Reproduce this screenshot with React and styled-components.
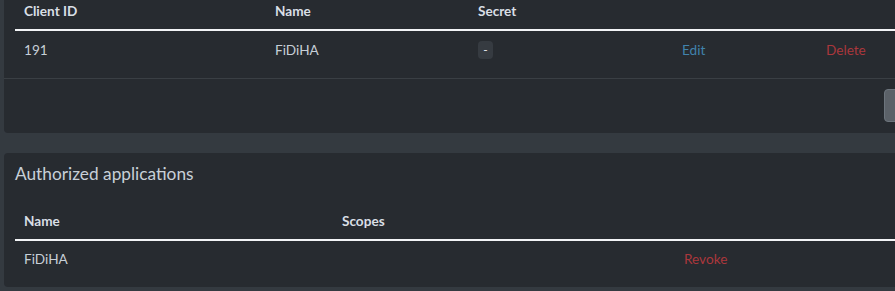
import styled, { createGlobalStyle } from "styled-components";

const GlobalStyle = createGlobalStyle`
    *, *::before, *::after {
        box-sizing: border-box;
    }

    html, body {
        margin: 0;
        padding: 0;
        background: #343a40;
        overflow: hidden;
    }

    body {
        font-family: Lato, "Open Sans", sans-serif;
        color: #ced4da;
    }
`

const Page = styled.div`
    display: flex;
    flex-direction: column;
    gap: 20px;
    margin-top: -18px;
    padding-left: 4px;
    width: 948px;
`

const Card = styled.section`
    background: #272b30;
    border-radius: 4px;
`

const CardBody = styled.div`
    padding: 11px 11px 10px;
`

const CardTitle = styled.h5`
    margin: 0 0 19px;
    font-size: 17.3px;
    font-weight: 400;
    line-height: 20px;
    color: #c8d0d8;
`

const CardFooter = styled.div`
    display: flex;
    padding: 10px 0 11px;
    border-top: 1px solid #3a3f44;
`

const FooterButton = styled.button`
    width: 60px;
    height: 33px;
    margin-left: 880px;
    background: #5b6168;
    border: 1px solid #6c747c;
    border-radius: 4px;
    color: #fff;
    font-family: inherit;
`

const Table = styled.table`
    width: 922px;
    border-collapse: collapse;
    table-layout: fixed;
    font-size: 13.6px;
    line-height: 18px;
`

const Th = styled.th`
    width: ${p => `${p.$w}px`};
    padding: 9px;
    text-align: left;
    font-weight: 700;
    color: #d9dfe5;
    border-bottom: 2px solid #f2f4f6;
`

const Td = styled.td`
    padding: 9px;
    text-align: left;
    white-space: nowrap;
    color: ${p => p.$tone === "edit" ? "#4183ad" : p.$tone === "danger" ? "#ab373c" : "#c7cfd7"};
`

const Secret = styled.span`
    display: inline-block;
    width: 15px;
    height: 18px;
    border-radius: 4px;
    background: #363b41;
    text-align: center;
    font-size: 12px;
    line-height: 17px;
    color: #e9ecef;
`

function ClientsCard() {
    return (
        <Card>
            <CardBody>
                <Table>
                    <thead>
                        <tr>
                            <Th $w={251}>Client ID</Th>
                            <Th $w={203}>Name</Th>
                            <Th $w={204}>Secret</Th>
                            <Th $w={144}></Th>
                            <Th $w={120}></Th>
                        </tr>
                    </thead>
                    <tbody>
                        <tr>
                            <Td>191</Td>
                            <Td>FiDiHA</Td>
                            <Td><Secret>-</Secret></Td>
                            <Td $tone="edit">Edit</Td>
                            <Td $tone="danger">Delete</Td>
                        </tr>
                    </tbody>
                </Table>
            </CardBody>
            <CardFooter>
                <FooterButton aria-label="New client" />
            </CardFooter>
        </Card>
    )
}

function AuthorizedCard() {
    return (
        <Card>
            <CardBody>
                <CardTitle>Authorized applications</CardTitle>
                <Table>
                    <thead>
                        <tr>
                            <Th $w={318}>Name</Th>
                            <Th $w={342}>Scopes</Th>
                            <Th $w={262}></Th>
                        </tr>
                    </thead>
                    <tbody>
                        <tr>
                            <Td>FiDiHA</Td>
                            <Td></Td>
                            <Td $tone="danger">Revoke</Td>
                        </tr>
                    </tbody>
                </Table>
            </CardBody>
        </Card>
    )
}

export default function App() {
    return (
        <>
            <GlobalStyle />
            <Page>
                <ClientsCard />
                <AuthorizedCard />
            </Page>
        </>
    )
}
